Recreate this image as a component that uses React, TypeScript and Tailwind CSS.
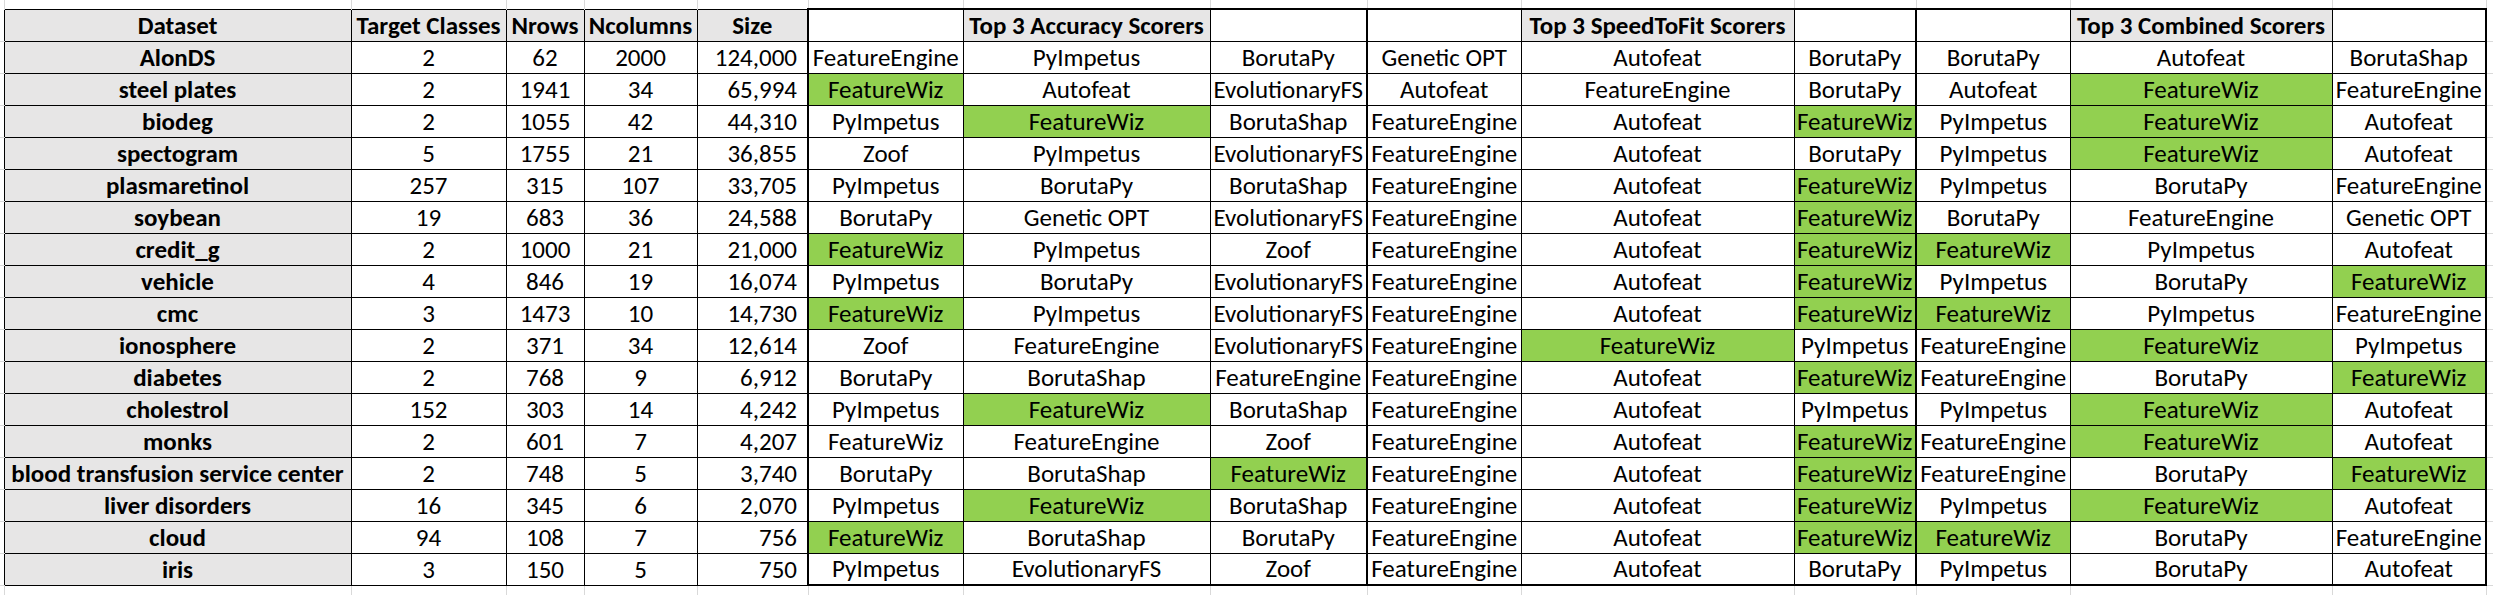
import React from 'react'

// column widths in px, left to right (Dataset .. Combined 3)
const widths = [347, 155, 78, 113, 111, 155, 247, 157, 154, 273, 122, 154, 262, 154]
const colClass = [
  'w-[347px]',
  'w-[155px]',
  'w-[78px]',
  'w-[113px]',
  'w-[111px]',
  'w-[155px]',
  'w-[247px]',
  'w-[157px]',
  'w-[154px]',
  'w-[273px]',
  'w-[122px]',
  'w-[154px]',
  'w-[262px]',
  'w-[154px]',
]

const header = [
  'Dataset',
  'Target Classes',
  'Nrows',
  'Ncolumns',
  'Size',
  '',
  'Top 3 Accuracy Scorers',
  '',
  '',
  'Top 3 SpeedToFit Scorers',
  '',
  '',
  'Top 3 Combined Scorers',
  '',
]
const grayHeader = [0, 1, 2, 3, 4, 6, 9, 12]

// a trailing * marks a green cell
const rows: string[][] = [
  ['AlonDS', '2', '62', '2000', '124,000', 'FeatureEngine', 'PyImpetus', 'BorutaPy', 'Genetic OPT', 'Autofeat', 'BorutaPy', 'BorutaPy', 'Autofeat', 'BorutaShap'],
  ['steel plates', '2', '1941', '34', '65,994', 'FeatureWiz*', 'Autofeat', 'EvolutionaryFS', 'Autofeat', 'FeatureEngine', 'BorutaPy', 'Autofeat', 'FeatureWiz*', 'FeatureEngine'],
  ['biodeg', '2', '1055', '42', '44,310', 'PyImpetus', 'FeatureWiz*', 'BorutaShap', 'FeatureEngine', 'Autofeat', 'FeatureWiz*', 'PyImpetus', 'FeatureWiz*', 'Autofeat'],
  ['spectogram', '5', '1755', '21', '36,855', 'Zoof', 'PyImpetus', 'EvolutionaryFS', 'FeatureEngine', 'Autofeat', 'BorutaPy', 'PyImpetus', 'FeatureWiz*', 'Autofeat'],
  ['plasmaretinol', '257', '315', '107', '33,705', 'PyImpetus', 'BorutaPy', 'BorutaShap', 'FeatureEngine', 'Autofeat', 'FeatureWiz*', 'PyImpetus', 'BorutaPy', 'FeatureEngine'],
  ['soybean', '19', '683', '36', '24,588', 'BorutaPy', 'Genetic OPT', 'EvolutionaryFS', 'FeatureEngine', 'Autofeat', 'FeatureWiz*', 'BorutaPy', 'FeatureEngine', 'Genetic OPT'],
  ['credit_g', '2', '1000', '21', '21,000', 'FeatureWiz*', 'PyImpetus', 'Zoof', 'FeatureEngine', 'Autofeat', 'FeatureWiz*', 'FeatureWiz*', 'PyImpetus', 'Autofeat'],
  ['vehicle', '4', '846', '19', '16,074', 'PyImpetus', 'BorutaPy', 'EvolutionaryFS', 'FeatureEngine', 'Autofeat', 'FeatureWiz*', 'PyImpetus', 'BorutaPy', 'FeatureWiz*'],
  ['cmc', '3', '1473', '10', '14,730', 'FeatureWiz*', 'PyImpetus', 'EvolutionaryFS', 'FeatureEngine', 'Autofeat', 'FeatureWiz*', 'FeatureWiz*', 'PyImpetus', 'FeatureEngine'],
  ['ionosphere', '2', '371', '34', '12,614', 'Zoof', 'FeatureEngine', 'EvolutionaryFS', 'FeatureEngine', 'FeatureWiz*', 'PyImpetus', 'FeatureEngine', 'FeatureWiz*', 'PyImpetus'],
  ['diabetes', '2', '768', '9', '6,912', 'BorutaPy', 'BorutaShap', 'FeatureEngine', 'FeatureEngine', 'Autofeat', 'FeatureWiz*', 'FeatureEngine', 'BorutaPy', 'FeatureWiz*'],
  ['cholestrol', '152', '303', '14', '4,242', 'PyImpetus', 'FeatureWiz*', 'BorutaShap', 'FeatureEngine', 'Autofeat', 'PyImpetus', 'PyImpetus', 'FeatureWiz*', 'Autofeat'],
  ['monks', '2', '601', '7', '4,207', 'FeatureWiz', 'FeatureEngine', 'Zoof', 'FeatureEngine', 'Autofeat', 'FeatureWiz*', 'FeatureEngine', 'FeatureWiz*', 'Autofeat'],
  ['blood transfusion service center', '2', '748', '5', '3,740', 'BorutaPy', 'BorutaShap', 'FeatureWiz*', 'FeatureEngine', 'Autofeat', 'FeatureWiz*', 'FeatureEngine', 'BorutaPy', 'FeatureWiz*'],
  ['liver disorders', '16', '345', '6', '2,070', 'PyImpetus', 'FeatureWiz*', 'BorutaShap', 'FeatureEngine', 'Autofeat', 'FeatureWiz*', 'PyImpetus', 'FeatureWiz*', 'Autofeat'],
  ['cloud', '94', '108', '7', '756', 'FeatureWiz*', 'BorutaShap', 'BorutaPy', 'FeatureEngine', 'Autofeat', 'FeatureWiz*', 'FeatureWiz*', 'BorutaPy', 'FeatureEngine'],
  ['iris', '3', '150', '5', '750', 'PyImpetus', 'EvolutionaryFS', 'Zoof', 'FeatureEngine', 'Autofeat', 'BorutaPy', 'PyImpetus', 'BorutaPy', 'Autofeat'],
]

const thickLeft = [5, 8, 11]
const thickRight = [7, 10, 13]

function borders(col: number, first: boolean, last: boolean) {
  const scorer = col >= 5
  return [
    'border-black',
    thickLeft.includes(col) ? 'border-l-2' : 'border-l',
    thickRight.includes(col) ? 'border-r-2' : 'border-r',
    first && scorer ? 'border-t-2' : 'border-t',
    last && scorer ? 'border-b-2' : 'border-b',
  ].join(' ')
}

const grid = 'border-[#d9d9d9]'

export default function App() {
  return (
    <div
      className="w-[2493px] h-[595px] overflow-hidden bg-white text-black"
      style={{ fontFamily: "Carlito, Calibri, 'Liberation Sans', Arial, sans-serif" }}
    >
      <table className="table-fixed border-collapse text-[25px] leading-none">
        <colgroup>
          <col className="w-[4px]" />
          {colClass.map((c, i) => (
            <col key={i} className={c} />
          ))}
          <col className="w-[7px]" />
        </colgroup>
        <tbody>
          <tr className="h-[9px]">
            <td className={`border-r ${grid}`} />
            {widths.map((_, i) => (
              <td key={i} className={`border-r ${grid}`} />
            ))}
            <td />
          </tr>
          <tr className="h-[32px]">
            <td className={`border-b ${grid}`} />
            {header.map((h, i) => (
              <td
                key={i}
                className={`${borders(i, true, false)} text-[25px] font-bold leading-none text-center whitespace-nowrap p-0 ${
                  grayHeader.includes(i) ? 'bg-[#e7e6e6]' : 'bg-white'
                }`}
              >
                {h}
              </td>
            ))}
            <td className={`border-b ${grid}`} />
          </tr>
          {rows.map((r, ri) => (
            <tr key={ri} className="h-[32px]">
              <td className={`border-b ${grid}`} />
              {r.map((v, ci) => {
                const green = v.endsWith('*')
                const text = green ? v.slice(0, -1) : v
                const last = ri === rows.length - 1
                let cls = 'text-center'
                if (ci === 0) cls = 'text-center font-bold bg-[#e7e6e6]'
                else if (ci === 4) cls = 'text-right pr-[10px]'
                return (
                  <td
                    key={ci}
                    className={`${borders(ci, false, last)} ${cls} ${
                      green ? 'bg-[#92d050]' : ci === 0 ? '' : 'bg-white'
                    } text-[25px] leading-none whitespace-nowrap p-0 overflow-visible`}
                  >
                    {text}
                  </td>
                )
              })}
              <td className={`border-b ${grid}`} />
            </tr>
          ))}
          <tr className="h-[10px]">
            <td className={`border-r ${grid}`} />
            {widths.map((_, i) => (
              <td key={i} className={`border-r ${grid}`} />
            ))}
            <td />
          </tr>
        </tbody>
      </table>
    </div>
  )
}
